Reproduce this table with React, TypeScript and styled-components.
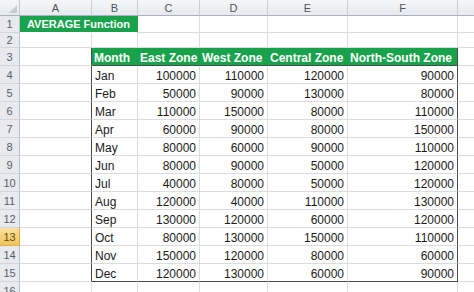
import React from "react";
import styled, { createGlobalStyle, css } from "styled-components";

const GlobalStyle = createGlobalStyle`
  html, body {
    margin: 0;
    padding: 0;
    background: #ffffff;
    overflow: hidden;
  }
`;

const GRID = "#dadcdf";
const DARK = "#4a4a4a";
const GREEN = "#17a24b";

const columns = ["A", "B", "C", "D", "E", "F"];

const headers = ["Month", "East Zone", "West Zone", "Central Zone", "North-South Zone"];

const data: [string, number, number, number, number][] = [
  ["Jan", 100000, 110000, 120000, 90000],
  ["Feb", 50000, 90000, 130000, 80000],
  ["Mar", 110000, 150000, 80000, 110000],
  ["Apr", 60000, 90000, 80000, 150000],
  ["May", 80000, 60000, 90000, 110000],
  ["Jun", 80000, 90000, 50000, 120000],
  ["Jul", 40000, 80000, 50000, 120000],
  ["Aug", 120000, 40000, 110000, 130000],
  ["Sep", 130000, 120000, 60000, 120000],
  ["Oct", 80000, 130000, 150000, 110000],
  ["Nov", 150000, 120000, 80000, 60000],
  ["Dec", 120000, 130000, 60000, 90000],
];

const ACTIVE_ROW = 13;

// last track is column G, only its left edge shows in the window
const Sheet = styled.div`
  display: grid;
  grid-template-columns: 20px 72px 46px 62px 68px 80px 110px 64px;
  grid-template-rows: 16px 17px 15px 18px repeat(13, 18px);
  font-family: "Liberation Sans", Arial, sans-serif;
  width: 474px;
  height: 292px;
  overflow: hidden;
`;

const headerBg = css`
  background: linear-gradient(#f5f6f8, #e6e9ed);
`;

const Corner = styled.div`
  position: relative;
  ${headerBg};
  border-right: 1px solid #c3c8d0;
  border-bottom: 1px solid #aab2bd;
  box-sizing: border-box;

  &::after {
    content: "";
    position: absolute;
    right: 2px;
    bottom: 2px;
    border-style: solid;
    border-width: 0 0 8px 8px;
    border-color: transparent transparent #c7ccd3 transparent;
  }
`;

const ColHeader = styled.div`
  ${headerBg};
  border-right: 1px solid #c9ced6;
  border-bottom: 1px solid #aab2bd;
  box-sizing: border-box;
  display: flex;
  align-items: center;
  justify-content: center;
  font-size: 11px;
  color: #4d5560;
`;

const RowHeader = styled.div<{ $active?: boolean }>`
  background: ${({ $active }) =>
    $active ? "linear-gradient(#fbe1a0, #f1c35c)" : "#e8eaee"};
  border-right: 1px solid ${({ $active }) => ($active ? "#e0a93c" : "#b9c0ca")};
  border-bottom: 1px solid ${({ $active }) => ($active ? "#e0b24f" : "#d3d7dd")};
  box-sizing: border-box;
  display: flex;
  align-items: center;
  justify-content: center;
  font-size: 11px;
  color: ${({ $active }) => ($active ? "#6b4a10" : "#56606c")};
`;

const Cell = styled.div<{
  $align?: "left" | "right" | "center";
  $right?: string;
  $bottom?: string;
  $span?: number;
}>`
  grid-column: span ${({ $span }) => $span ?? 1};
  box-sizing: border-box;
  border-right: 1px solid ${({ $right }) => $right ?? GRID};
  border-bottom: 1px solid ${({ $bottom }) => $bottom ?? GRID};
  display: flex;
  align-items: flex-end;
  justify-content: ${({ $align }) =>
    $align === "right" ? "flex-end" : $align === "center" ? "center" : "flex-start"};
  padding: 0 3px 0 3px;
  font-size: 12px;
  line-height: 14px;
  color: #1a1a1a;
  white-space: nowrap;
  overflow: hidden;
`;

const TitleCell = styled(Cell)`
  background: ${GREEN};
  color: #ffffff;
  font-size: 11px;
  font-weight: bold;
  align-items: center;
  border-right-color: ${GREEN};
  border-bottom-color: #ffffff;
`;

const HeadCell = styled(Cell)`
  background: ${GREEN};
  color: #ffffff;
  font-weight: bold;
  padding-left: 2px;
`;

export default function App() {
  const rows: React.ReactNode[] = [];

  for (let r = 1; r <= 16; r++) {
    rows.push(
      <RowHeader key={`rh${r}`} $active={r === ACTIVE_ROW}>
        {r}
      </RowHeader>
    );

    const inTable = r >= 3 && r <= 15;

    if (r === 1) {
      rows.push(
        <TitleCell key="title" $span={2} $align="center">
          AVERAGE Function
        </TitleCell>
      );
      ["C", "D", "E", "F", "G"].forEach((c) => rows.push(<Cell key={`${c}${r}`} />));
      continue;
    }

    // column A
    rows.push(<Cell key={`A${r}`} $right={inTable ? DARK : undefined} />);

    if (r === 3) {
      headers.forEach((h, i) =>
        rows.push(
          <HeadCell
            key={`h${i}`}
            $right={i === headers.length - 1 ? DARK : GREEN}
            $bottom={DARK}
          >
            {h}
          </HeadCell>
        )
      );
    } else if (inTable) {
      const row = data[r - 4];
      const last = r === 15;
      rows.push(
        <Cell key={`B${r}`} $bottom={last ? DARK : undefined}>
          {row[0]}
        </Cell>
      );
      row.slice(1).forEach((v, i) =>
        rows.push(
          <Cell
            key={`v${r}-${i}`}
            $align="right"
            $right={i === 3 ? DARK : undefined}
            $bottom={last ? DARK : undefined}
          >
            {v}
          </Cell>
        )
      );
    } else {
      ["B", "C", "D", "E", "F"].forEach((c) => rows.push(<Cell key={`${c}${r}`} />));
    }

    rows.push(<Cell key={`G${r}`} />);
  }

  return (
    <>
      <GlobalStyle />
      <Sheet>
        <Corner />
        {columns.map((c) => (
          <ColHeader key={c}>{c}</ColHeader>
        ))}
        <ColHeader />
        {rows}
      </Sheet>
    </>
  );
}
